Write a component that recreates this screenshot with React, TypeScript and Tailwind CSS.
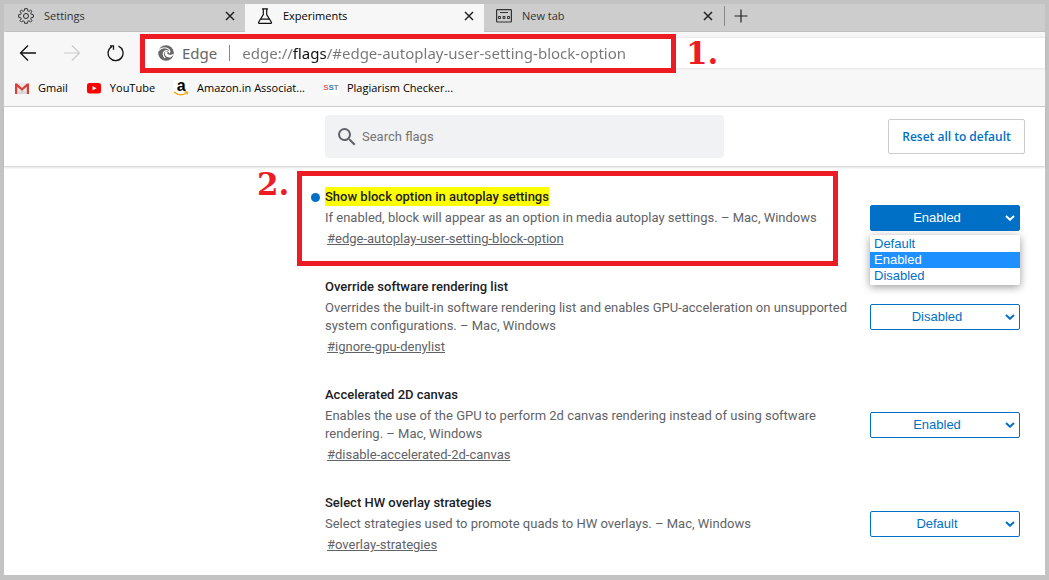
import { Fragment, type ReactNode } from 'react';
import { MdSearch } from 'react-icons/md';

const chromeFont = "font-['Open_Sans','Noto_Sans',sans-serif]";

function GearIcon() {
  return (
    <svg viewBox="0 0 24 24" className="size-4" fill="none" stroke="#333" strokeWidth="1.5" strokeLinejoin="round">
      <path d="M10 1h4l.6 3.2 1.8.8L19 3.2 21 5l-1.9 2.7.8 1.8 3.1.6v3.8l-3.1.6-.8 1.8L21 19l-2 2-2.6-1.8-1.8.8L14 23h-4l-.6-3-1.8-.8L5 21l-2-2 1.9-2.7-.8-1.8L1 13.900V10.100l3.100-.6.8-1.8L3 5l2-1.800 2.600 1.800 1.800-.8z" />
      <circle cx="12" cy="12" r="3.800" />
    </svg>
  );
}

function FlaskIcon() {
  return (
    <svg viewBox="0 0 16 16" className="size-4" fill="none" stroke="#111" strokeWidth="1.200">
      <path d="M5 .8h6M6.300 1v5.500L1.600 14.200q-.4 1 .6 1.100h11.600q1-.1.6-1.100L9.700 6.500V1M4 11.200h8" />
    </svg>
  );
}

function NewTabIcon() {
  return (
    <svg viewBox="0 0 16 16" className="size-4" fill="none" stroke="#333">
      <rect x=".6" y="1.600" width="14.800" height="12.400" rx=".8" strokeWidth="1.200" />
      <path d="M4 4.500h8" />
      <path d="M2.500 8.500h2v2h-2zM7 8.500h2v2h-2zM11.500 8.500h2v2h-2z" />
    </svg>
  );
}

function EdgeLogo() {
  return (
    <svg viewBox="0 0 16 16" className="size-4 shrink-0">
      <circle cx="8" cy="8" r="7.800" fill="#666" />
      <path d="M.4 5.800C2.500 3.300 6 2.200 9 3.200c2.300.8 3.100 2.500 2.600 4.300C10.500 5.700 7.800 5 6.300 6.500 4.500 8.300 5 11 7.200 13" fill="none" stroke="#fff" strokeWidth="1.100" />
      <path d="M9.300 8.800c.2 1.800 3 2.400 6.400.9" fill="none" stroke="#fff" strokeWidth="1.300" />
      <path d="M6.700 8c.5-1.500 2.200-1.800 3.100-.8-.8.700-.9 1.400-.4 2.200 1 1.500 3.400 1.800 5.500 1-1.200 1.600-3 2.300-4.700 1.900C8 11.700 6.400 10 6.700 8z" fill="#fff" />
    </svg>
  );
}

function GmailIcon() {
  return (
    <svg viewBox="0 0 16 16" className="size-4">
      <path d="M1 3h14v11H1z" fill="#e8e8e8" />
      <path d="M3 14 8 9l5 5z" fill="#d5d5d5" />
      <path d="M1 3.500h2L8 8l5-4.500h2V14h-2.200V6.800L8 10.800 3.200 6.800V14H1z" fill="#d93f35" />
    </svg>
  );
}

function YouTubeIcon() {
  return (
    <svg viewBox="0 0 16 16" className="size-4">
      <rect x="1" y="3" width="14" height="10.500" rx="2.500" fill="#f00" />
      <path d="m6.500 6 4 2.250-4 2.250z" fill="#fff" />
    </svg>
  );
}

function AmazonIcon() {
  return (
    <span className="relative flex size-4 justify-center rounded-xs bg-white font-['Liberation_Sans',sans-serif] text-base leading-[11px] font-bold text-black">
      a
      <svg viewBox="0 0 16 5" className="absolute bottom-0 left-0 h-[5px] w-4" fill="none" stroke="#f90" strokeWidth="1.300">
        <path d="M1 1q6 5 12 1.200M11.500 .8l3 .2-.6 2.500" />
      </svg>
    </span>
  );
}

function SstIcon() {
  return (
    <span className="flex size-4 items-center justify-center rounded-xs bg-white font-['Liberation_Sans',sans-serif] text-[8px] leading-none font-bold">
      <span className="text-[#e0605e]">S</span>
      <span className="text-[#2f7fc0]">S</span>
      <span className="text-[#888]">T</span>
    </span>
  );
}

function Chevron() {
  return (
    <svg viewBox="0 0 10 6" className="pointer-events-none absolute top-1/2 right-[5px] h-[6px] w-[10px] -translate-y-1/2" fill="none" stroke="currentColor" strokeWidth="2">
      <path d="m1 1 4 3.700L9 1" />
    </svg>
  );
}

const tabs = [
  { title: 'Settings', icon: <GearIcon />, active: false },
  { title: 'Experiments', icon: <FlaskIcon />, active: true },
  { title: 'New tab', icon: <NewTabIcon />, active: false },
];

function TabStrip() {
  return (
    <div className="flex h-7 bg-[#cdcdcd] pl-[2px]">
      {tabs.map((tab) => (
        <div
          key={tab.title}
          className={`flex w-[239px] items-center border-b pr-[9px] pb-[3px] pl-3 ${tab.active ? 'border-[#f7f7f7] bg-[#f7f7f7] text-black' : 'border-[#c0c0c0] text-[#333]'}`}
        >
          <button className="flex flex-1 items-center gap-[10px] text-left text-[11px] leading-4">
            {tab.icon}
            {tab.title}
          </button>
          <button aria-label={`Close ${tab.title}`} className="flex size-3 items-center justify-center">
            <svg viewBox="0 0 10 10" className="size-[10px]" stroke="#222" strokeWidth="1.500">
              <path d="m1 1 8 8M9 1 1 9" />
            </svg>
          </button>
        </div>
      ))}
      <div className="flex flex-1 items-center gap-[9px] border-b border-[#c0c0c0] pb-[3px] pl-[1px]">
        <span className="h-5 w-px bg-[#888]" />
        <button aria-label="Open new tab">
          <svg viewBox="0 0 14 14" className="size-[14px]" stroke="#222" strokeWidth="1.200">
            <path d="M7 .5v13M.5 7h13" />
          </svg>
        </button>
      </div>
    </div>
  );
}

function Toolbar() {
  return (
    <div className="flex h-[42px] items-center">
      <div className="flex shrink-0 items-center gap-[26px] pr-4 pl-[15px]">
        <button aria-label="Back">
          <svg viewBox="0 0 18 18" className="size-[18px]" fill="none" stroke="#111" strokeWidth="1.300">
            <path d="M17 9H1.500M9 1.500 1.500 9 9 16.500" />
          </svg>
        </button>
        <button aria-label="Forward" disabled>
          <svg viewBox="0 0 18 18" className="size-[18px]" fill="none" stroke="#ccc" strokeWidth="1.200">
            <path d="M1 9h15.500M9 1.500 16.500 9 9 16.500" />
          </svg>
        </button>
        <button aria-label="Reload">
          <svg viewBox="0 0 18 18" className="size-[18px]" fill="none" stroke="#111" strokeWidth="1.300">
            <path d="M11.500 2.200a7.500 7.500 0 1 1-6.500.3M3 1.800h3.500v4" />
          </svg>
        </button>
      </div>
      <div className="relative flex h-[30px] flex-1 items-center bg-white pl-[17px] font-['Noto_Sans',sans-serif] text-[15px] shadow-[0_0_3px_rgba(0,0,0,0.12)]">
        <EdgeLogo />
        <label htmlFor="address" className="pl-2 text-[#666]">
          Edge
        </label>
        <span className="mx-3 h-4 w-px bg-[#888]" />
        <input
          id="address"
          defaultValue="edge://flags/#edge-autoplay-user-setting-block-option"
          className="min-w-0 flex-1 bg-[linear-gradient(to_right,#767676_51px,#111_51px,#111_84px,#767676_84px)] bg-clip-text text-transparent outline-none"
        />
        <div className="pointer-events-none absolute top-[-4px] left-[-1px] h-[39px] w-[536px] border-5 border-[#ed1c24]" />
        <StepNumber className="top-[-3px] left-[545px]">1.</StepNumber>
      </div>
    </div>
  );
}

function StepNumber({ className, children }: { className: string; children: ReactNode }) {
  return (
    <span
      className={`pointer-events-none absolute font-['DejaVu_Serif',serif] text-[31px] leading-9 font-bold text-[#ed1c24] ${className}`}
    >
      {children}
    </span>
  );
}

const bookmarks = [
  { title: 'Gmail', icon: <GmailIcon /> },
  { title: 'YouTube', icon: <YouTubeIcon /> },
  { title: 'Amazon.in Associat...', icon: <AmazonIcon /> },
  { title: 'Plagiarism Checker...', icon: <SstIcon /> },
];

function Bookmarks() {
  return (
    <nav className="flex h-[33px] items-center gap-[18px] border-b border-[#ccc] pb-1 pl-[10px]">
      {bookmarks.map((b) => (
        <a key={b.title} href="#" className="flex items-center gap-2 text-[11px] text-black">
          {b.icon}
          {b.title}
        </a>
      ))}
    </nav>
  );
}

const options = ['Default', 'Enabled', 'Disabled'];

const flags = [
  {
    name: 'Show block option in autoplay settings',
    text: 'If enabled, block will appear as an option in media autoplay settings. – Mac, Windows',
    id: 'edge-autoplay-user-setting-block-option',
    value: 'Enabled',
    open: true,
  },
  {
    name: 'Override software rendering list',
    text: 'Overrides the built-in software rendering list and enables GPU-acceleration on unsupported system configurations. – Mac, Windows',
    id: 'ignore-gpu-denylist',
    value: 'Disabled',
    open: false,
  },
  {
    name: 'Accelerated 2D canvas',
    text: 'Enables the use of the GPU to perform 2d canvas rendering instead of using software rendering. – Mac, Windows',
    id: 'disable-accelerated-2d-canvas',
    value: 'Enabled',
    open: false,
  },
  {
    name: 'Select HW overlay strategies',
    text: 'Select strategies used to promote quads to HW overlays. – Mac, Windows',
    id: 'overlay-strategies',
    value: 'Default',
    open: false,
  },
];

function FlagRow({ flag }: { flag: (typeof flags)[number] }) {
  return (
    <section className="flex items-center gap-5">
      <div className="relative min-w-0 flex-1 text-[13px] leading-[18px] text-[#5f6368]">
        <h2 className="leading-5 font-medium text-[#202124]">
          <label htmlFor={flag.id} className={flag.open ? 'bg-[#ff0] py-[2px]' : ''}>
            {flag.name}
          </label>
        </h2>
        <p className="pt-[2px] pb-[3px]">{flag.text}</p>
        <a href={`#${flag.id}`} className="ml-[2px] block w-fit underline">
          #{flag.id}
        </a>
        {flag.open && (
          <Fragment>
            <span className="absolute top-[6px] left-[-14px] size-[9px] rounded-full bg-[#0070c6]" />
            <div className="pointer-events-none absolute top-[-16px] right-3 bottom-[-18px] left-[-28px] border-5 border-[#ed1c24]" />
            <StepNumber className="top-[-21px] left-[-68px]">2.</StepNumber>
          </Fragment>
        )}
      </div>
      <div className={`relative w-[150px] shrink-0 font-['Liberation_Sans',sans-serif] text-[13px] ${flag.open ? 'text-white' : 'text-[#0070c6]'}`}>
        <select
          id={flag.id}
          defaultValue={flag.value}
          className={`block h-[26px] w-full appearance-none rounded-xs border border-[#0070c6] pr-4 text-center [text-align-last:center] ${flag.open ? 'bg-[#0070c6]' : 'bg-white'}`}
        >
          {options.map((o) => (
            <option key={o}>{o}</option>
          ))}
        </select>
        <Chevron />
        {flag.open && (
          <ul className="absolute top-[30px] left-0 w-full rounded-xs bg-white py-px leading-4 shadow-[0_2px_8px_rgba(0,0,0,0.4)]">
            {options.map((o) => (
              <li key={o} className={o === flag.value ? 'bg-[#1e90ff] px-1 text-white' : 'px-1 text-[#0070c6]'}>
                {o}
              </li>
            ))}
          </ul>
        )}
      </div>
    </section>
  );
}

export default function App() {
  return (
    <div className="flex min-h-screen flex-col border-4 border-b-[5px] border-[#c3c3c3] bg-white font-['Roboto',sans-serif]">
      <header className={`bg-[#f7f7f7] ${chromeFont}`}>
        <TabStrip />
        <Toolbar />
        <Bookmarks />
      </header>
      <div className="flex h-[60px] items-center justify-between gap-5 border-b border-[#ddd] pr-5 pl-[321px] shadow-[0_1px_2px_rgba(0,0,0,0.1)]">
        <label className="flex h-[43px] w-full max-w-[399px] items-center gap-[3px] rounded-sm bg-[#f1f2f4] pl-[10px]">
          <MdSearch className="size-6 text-[#5f6368]" />
          <input type="search" aria-label="Search flags" placeholder="Search flags" className="min-w-0 flex-1 text-[13px] outline-none placeholder:text-[#757575]" />
        </label>
        <button className={`h-[35px] w-[137px] shrink-0 rounded-xs border border-[#ccc] text-xs font-semibold text-[#0070c6] ${chromeFont}`}>
          Reset all to default
        </button>
      </div>
      <main className="flex flex-col gap-[29px] pt-5 pr-[25px] pb-4 pl-[321px]">
        {flags.map((flag) => (
          <FlagRow key={flag.id} flag={flag} />
        ))}
      </main>
    </div>
  );
}
